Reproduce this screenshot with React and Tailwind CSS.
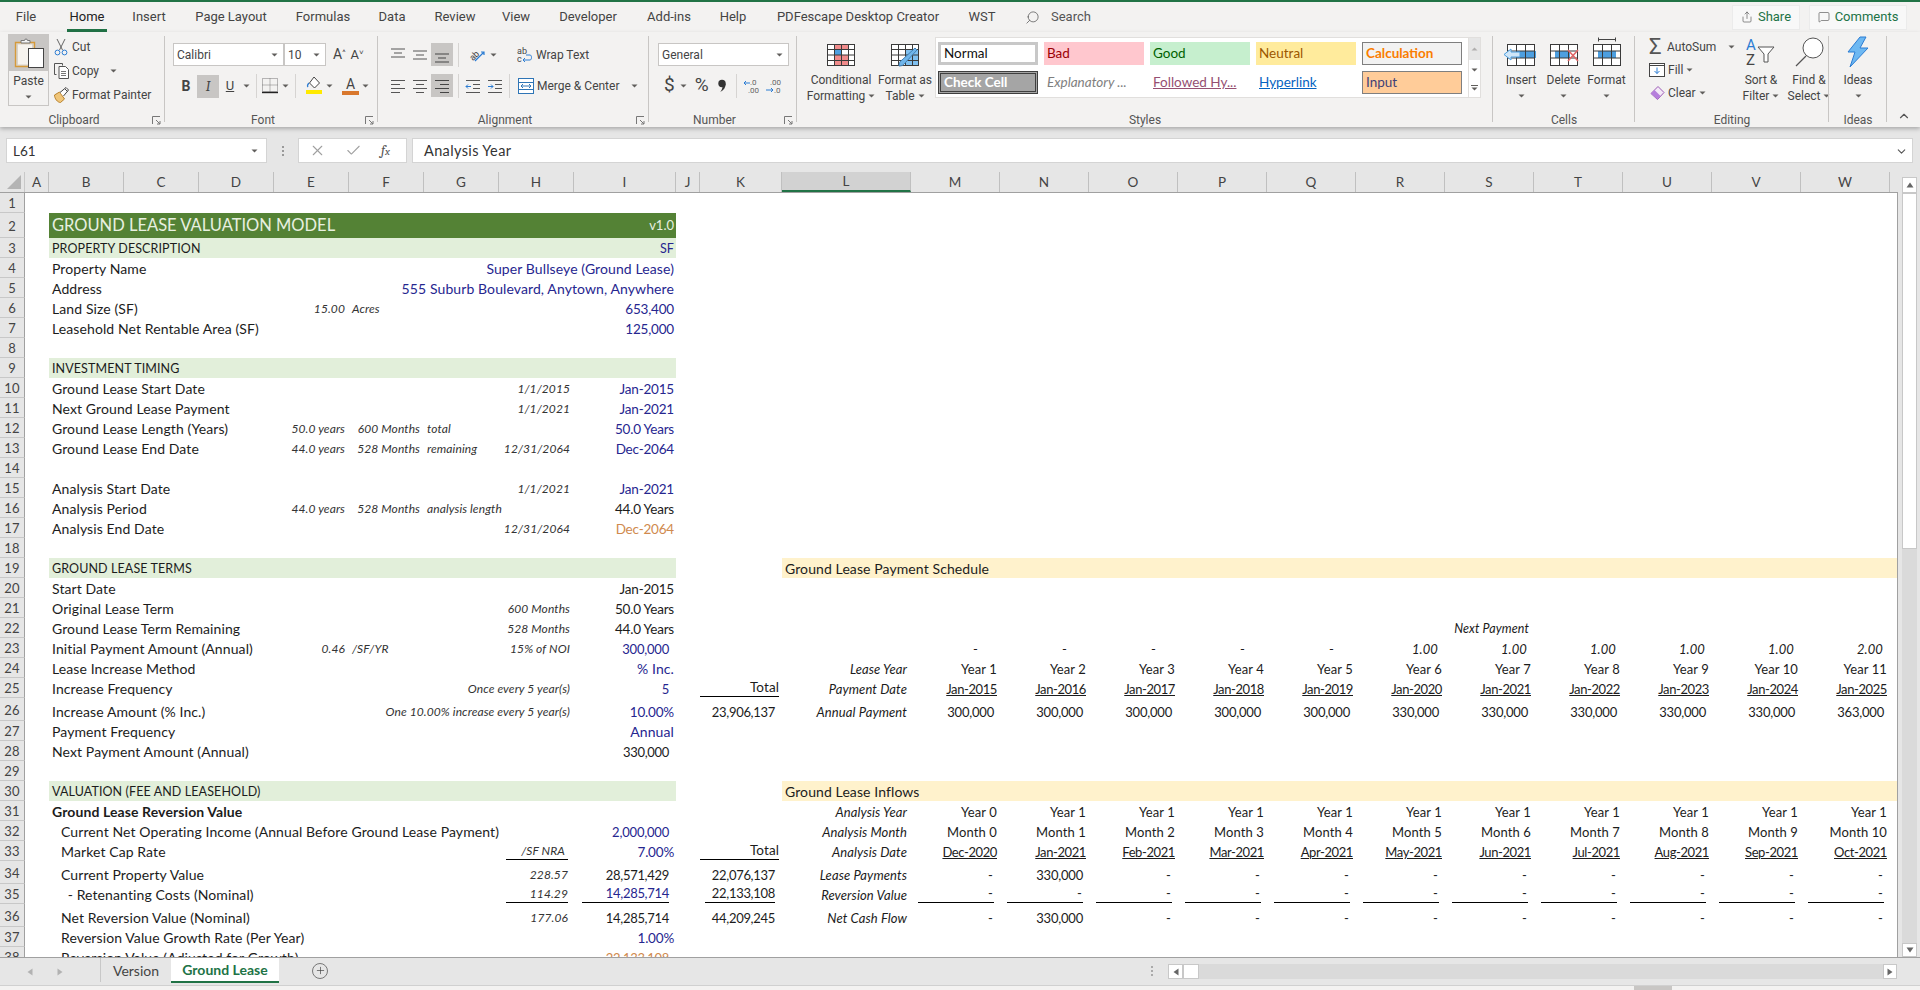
import React from 'react';
import { Search, Share, MessageSquare, ChevronDown, ChevronUp, Plus, X, Check } from 'lucide-react';

const COLS = [
  { k: 'A', w: 'w-[24px]' }, { k: 'B', w: 'w-[75px]' }, { k: 'C', w: 'w-[75px]' }, { k: 'D', w: 'w-[75px]' },
  { k: 'E', w: 'w-[75px]' }, { k: 'F', w: 'w-[75px]' }, { k: 'G', w: 'w-[75px]' }, { k: 'H', w: 'w-[75px]' },
  { k: 'I', w: 'w-[102px]' }, { k: 'J', w: 'w-[24px]' }, { k: 'K', w: 'w-[82px]' }, { k: 'L', w: 'w-[129px]' },
  { k: 'M', w: 'w-[89px]' }, { k: 'N', w: 'w-[89px]' }, { k: 'O', w: 'w-[89px]' }, { k: 'P', w: 'w-[89px]' },
  { k: 'Q', w: 'w-[89px]' }, { k: 'R', w: 'w-[89px]' }, { k: 'S', w: 'w-[89px]' }, { k: 'T', w: 'w-[89px]' },
  { k: 'U', w: 'w-[89px]' }, { k: 'V', w: 'w-[89px]' }, { k: 'W', w: 'w-[89px]' },
];
const LEFT_COLS = COLS.slice(0, 10);
const RIGHT_COLS = COLS.slice(10);
const SERIES = 'MNOPQRSTUVW'.split('');

// text styles for the sheet cells
const blueText = 'pr-[2px] text-[#26268f]';
const blue = 'pr-[2px] text-[#26268f] text-[13.5px] tracking-[-0.2px]';
const blueAcct = 'pr-[7px] text-[#26268f] text-[13px] tracking-[-0.2px]';
const note = 'pr-[4px] italic text-[12px] text-[#333333]';
const noteL = 'pl-[3px] italic text-[12px] text-[#333333]';
const noteWide = 'pr-[6px] italic text-[12px] text-[#333333]';
const acct = 'pr-[6px] text-[13px] tracking-[-0.2px]';
const acctBig = 'pr-[7px] text-[13px] tracking-[-0.3px]';
const plain = 'pr-[2px] text-[13.5px] tracking-[-0.2px]';

const L = (t, cls = 'pl-[3px]') => ({ t, cls });
const R = (t, cls = plain, extra = {}) => ({ t, cls, right: true, ...extra });
const rowLabel = (t) => R(t, 'pr-[4px] italic text-[13px]');
const indent = (t) => L(t, 'pl-[12px]');
const series = (values, make) => Object.fromEntries(values.map((v, i) => [SERIES[i], make(v)]));

const head = (t) => R(t, 'pr-[3px] text-[13px]');
const dates = (t) => R(t, 'pr-[3px] underline text-[13px] tracking-[-0.4px]');
const money = (t) => R(t, acct);
const dash = (t) => (t === '-' ? R('-', 'pr-[7px] text-[13px]') : R(t, acct));

const ROWS = [
  { n: 1 },
  { n: 2, h: 'h-[25px]', title: true },
  { n: 3, band: ['PROPERTY DESCRIPTION', 'SF'] },
  { n: 4, B: L('Property Name'), I: R('Super Bullseye (Ground Lease)', blueText) },
  { n: 5, B: L('Address'), I: R('555 Suburb Boulevard, Anytown, Anywhere', blueText) },
  { n: 6, B: L('Land Size (SF)'), E: R('15.00', note), F: L('Acres', noteL), I: R('653,400', blue) },
  { n: 7, B: L('Leasehold Net Rentable Area (SF)'), I: R('125,000', blue) },
  { n: 8 },
  { n: 9, band: ['INVESTMENT TIMING', ''] },
  { n: 10, B: L('Ground Lease Start Date'), H: R('1/1/2015', note), I: R('Jan-2015', blue) },
  { n: 11, B: L('Next Ground Lease Payment'), H: R('1/1/2021', note), I: R('Jan-2021', blue) },
  { n: 12, B: L('Ground Lease Length (Years)'), E: R('50.0 years', note), F: R('600 Months', note), G: L('total', noteL), I: R('50.0 Years', blue) },
  { n: 13, B: L('Ground Lease End Date'), E: R('44.0 years', note), F: R('528 Months', note), G: L('remaining', noteL), H: R('12/31/2064', note), I: R('Dec-2064', blue) },
  { n: 14 },
  { n: 15, B: L('Analysis Start Date'), H: R('1/1/2021', note), I: R('Jan-2021', blue) },
  { n: 16, B: L('Analysis Period'), E: R('44.0 years', note), F: R('528 Months', note), G: L('analysis length', noteL), I: R('44.0 Years') },
  { n: 17, B: L('Analysis End Date'), H: R('12/31/2064', note), I: R('Dec-2064', 'pr-[2px] text-[13.5px] tracking-[-0.2px] text-[#d08a4e]') },
  { n: 18 },
  { n: 19, band: ['GROUND LEASE TERMS', ''], rightBand: 'Ground Lease Payment Schedule' },
  { n: 20, B: L('Start Date'), I: R('Jan-2015') },
  { n: 21, B: L('Original Lease Term'), H: R('600 Months', note), I: R('50.0 Years') },
  { n: 22, B: L('Ground Lease Term Remaining'), H: R('528 Months', note), I: R('44.0 Years'), S: R('Next Payment', 'pr-[5px] italic text-[12.5px]') },
  {
    n: 23, B: L('Initial Payment Amount (Annual)'), E: R('0.46', note), F: L('/SF/YR', noteL), H: R('15% of NOI', note), I: R('300,000', blueAcct),
    ...series(['-', '-', '-', '-', '-', '1.00', '1.00', '1.00', '1.00', '1.00', '2.00'], (v) => (v === '-' ? R(v, 'pr-[22px] italic') : R(v, 'pr-[7px] italic text-[13px]'))),
  },
  {
    n: 24, B: L('Lease Increase Method'), I: R('% Inc.', blueText), L: rowLabel('Lease Year'),
    ...series(['Year 1', 'Year 2', 'Year 3', 'Year 4', 'Year 5', 'Year 6', 'Year 7', 'Year 8', 'Year 9', 'Year 10', 'Year 11'], head),
  },
  {
    n: 25, B: L('Increase Frequency'), H: R('Once every 5 year(s)', note), I: R('5', blueAcct),
    K: R('Total', 'text-[13.5px]', { line: 'w-[79px] mr-[3px]' }), L: rowLabel('Payment Date'),
    ...series(['Jan-2015', 'Jan-2016', 'Jan-2017', 'Jan-2018', 'Jan-2019', 'Jan-2020', 'Jan-2021', 'Jan-2022', 'Jan-2023', 'Jan-2024', 'Jan-2025'], dates),
  },
  {
    n: 26, h: 'h-[23px]', B: L('Increase Amount (% Inc.)'), H: R('One 10.00% increase every 5 year(s)', note), I: R('10.00%', blue),
    K: R('23,906,137', acctBig), L: rowLabel('Annual Payment'),
    ...series(['300,000', '300,000', '300,000', '300,000', '300,000', '330,000', '330,000', '330,000', '330,000', '330,000', '363,000'], money),
  },
  { n: 27, B: L('Payment Frequency'), I: R('Annual', blueText) },
  { n: 28, B: L('Next Payment Amount (Annual)'), I: R('330,000', acctBig) },
  { n: 29 },
  { n: 30, band: ['VALUATION (FEE AND LEASEHOLD)', ''], rightBand: 'Ground Lease Inflows' },
  {
    n: 31, B: L('Ground Lease Reversion Value', 'pl-[3px] font-bold'), L: rowLabel('Analysis Year'),
    ...series(['Year 0', 'Year 1', 'Year 1', 'Year 1', 'Year 1', 'Year 1', 'Year 1', 'Year 1', 'Year 1', 'Year 1', 'Year 1'], head),
  },
  {
    n: 32, B: indent('Current Net Operating Income (Annual Before Ground Lease Payment)'), I: R('2,000,000', blueAcct), L: rowLabel('Analysis Month'),
    ...series(['Month 0', 'Month 1', 'Month 2', 'Month 3', 'Month 4', 'Month 5', 'Month 6', 'Month 7', 'Month 8', 'Month 9', 'Month 10'], head),
  },
  {
    n: 33, B: indent('Market Cap Rate'), H: R('/SF NRA', 'pr-[3px] italic text-[12px] text-[#333333]', { line: 'w-[62px] mr-[6px]' }), I: R('7.00%', blue),
    K: R('Total', 'text-[13.5px]', { line: 'w-[79px] mr-[3px]' }), L: rowLabel('Analysis Date'),
    ...series(['Dec-2020', 'Jan-2021', 'Feb-2021', 'Mar-2021', 'Apr-2021', 'May-2021', 'Jun-2021', 'Jul-2021', 'Aug-2021', 'Sep-2021', 'Oct-2021'], dates),
  },
  {
    n: 34, h: 'h-[23px]', B: indent('Current Property Value'), H: R('228.57', noteWide), I: R('28,571,429', acctBig),
    K: R('22,076,137', acctBig), L: rowLabel('Lease Payments'),
    ...series(['-', '330,000', '-', '-', '-', '-', '-', '-', '-', '-', '-'], dash),
  },
  {
    n: 35, B: L(' - Retenanting Costs (Nominal)', 'pl-[15px]'), H: R('114.29', 'italic text-[12px] text-[#333333]', { line: 'w-[62px] mr-[6px]' }), I: R('14,285,714', 'text-[#26268f] text-[13px] tracking-[-0.3px]', { line: 'w-[87px] mr-[7px]' }),
    K: R('22,133,108', 'text-[13px] tracking-[-0.3px]', { line: 'w-[70px] mr-[7px]' }), L: rowLabel('Reversion Value'),
    ...series(Array(11).fill('-'), (v) => R(v, 'pr-[1px] text-[13px]', { line: 'w-[76px] mr-[6px]' })),
  },
  {
    n: 36, h: 'h-[23px]', B: indent('Net Reversion Value (Nominal)'), H: R('177.06', noteWide), I: R('14,285,714', acctBig),
    K: R('44,209,245', acctBig), L: rowLabel('Net Cash Flow'),
    ...series(['-', '330,000', '-', '-', '-', '-', '-', '-', '-', '-', '-'], dash),
  },
  { n: 37, B: indent('Reversion Value Growth Rate (Per Year)'), I: R('1.00%', blue) },
  { n: 38, B: indent('Reversion Value (Adjusted for Growth)'), I: R('22,133,108', 'pr-[7px] text-[13px] tracking-[-0.3px] text-[#d08a4e]') },
];

function Cell({ col, cell }) {
  if (!cell) return <div className={`${col.w} shrink-0`} />;
  return (
    <div className={`${col.w} shrink-0 flex items-end whitespace-pre ${cell.right ? 'justify-end' : 'justify-start'}`}>
      {cell.line ? (
        <div className={`${cell.line} mb-[1px] text-right border-b border-black leading-[17px] shrink-0 ${cell.cls}`}>{cell.t}</div>
      ) : (
        <span className={`leading-[18px] ${cell.cls}`}>{cell.t}</span>
      )}
    </div>
  );
}

function SheetRow({ row }) {
  return (
    <div className={`flex shrink-0 ${row.h || 'h-[20px]'}`}>
      <div className="w-[25px] shrink-0 flex items-center justify-center pt-[3px] bg-[#e6e6e6] border-r border-b border-r-[#a0a0a0] border-b-[#c8c8c8] text-[13px] text-[#444444]">
        {row.n}
      </div>
      <div className="w-[24px] shrink-0" />
      {row.title ? (
        <div className="w-[627px] shrink-0 flex items-center justify-between bg-[#548235] text-[#e8f0e0] pl-[3px] pr-[2px] tracking-normal">
          <span className="text-[16.5px]">GROUND LEASE VALUATION MODEL</span>
          <span className="text-[13px]">v1.0</span>
        </div>
      ) : row.band ? (
        <div className="w-[627px] shrink-0 flex items-end justify-between bg-[#e2efda] pl-[3px] pr-[2px] leading-[18px] text-[12.5px]">
          <span>{row.band[0]}</span>
          <span className="text-[#26268f]">{row.band[1]}</span>
        </div>
      ) : (
        LEFT_COLS.slice(1, 9).map((c) => <Cell key={c.k} col={c} cell={row[c.k]} />)
      )}
      <div className="w-[24px] shrink-0" />
      {row.rightBand ? (
        <>
          <div className="w-[82px] shrink-0" />
          <div className="w-[1116px] shrink-0 flex items-end bg-[#fff2cc] pl-[3px] leading-[18px]">{row.rightBand}</div>
        </>
      ) : (
        RIGHT_COLS.map((c) => <Cell key={c.k} col={c} cell={row[c.k]} />)
      )}
    </div>
  );
}

const Caret = ({ className = '' }) => (
  <svg width="7" height="4" viewBox="0 0 7 4" className={`shrink-0 ${className}`}>
    <path d="M0.5 0.5h6L3.5 3.5z" fill="#605e5c" />
  </svg>
);

const Launcher = () => (
  <svg width="9" height="9" viewBox="0 0 9 9">
    <path d="M0.5 8V0.5H8M4 4l4 4M8 5v3H5" fill="none" stroke="#777777" strokeWidth="1" />
  </svg>
);

function Group({ w, label, launcher, children, sep = true }) {
  return (
    <div className={`${w} shrink-0 h-[95px] flex flex-col relative`}>
      <div className="flex-1 flex min-h-0">{children}</div>
      <div className={`grid items-center h-[15px] mb-[1px] text-[12px] text-[#555555] justify-items-center ${launcher ? 'grid-cols-[1fr_17px]' : 'grid-cols-1'}`}>
        <span>{label}</span>
        {launcher && <Launcher />}
      </div>
      {sep && <div className="absolute right-0 top-[4px] bottom-[5px] w-[1px] bg-[#c8c6c4]" />}
    </div>
  );
}

// a plain spreadsheet-grid glyph used by the big ribbon buttons
function GridGlyph({ children, over, cols = [7, 14, 21], rows = [5.5, 11, 16.5] }) {
  return (
    <svg width="30" height="24" viewBox="0 0 30 24" className="shrink-0 overflow-visible">
      <g transform="translate(1 1)">
        <rect x="0" y="0" width="28" height="22" fill="#ffffff" />
        {children}
        <rect x="0.5" y="0.5" width="27" height="21" fill="none" stroke="#3a3a3a" />
        {cols.map((x) => <path key={x} d={`M${x + 0.5} 0V22`} stroke="#3a3a3a" />)}
        {rows.map((y) => <path key={y} d={`M0 ${y}H28`} stroke="#3a3a3a" />)}
        {over}
      </g>
    </svg>
  );
}

function BigButton({ w, glyph, lines, caretInline, className = '' }) {
  return (
    <div className={`${w} shrink-0 flex flex-col items-center pt-[10px] text-[12px] text-[#444444] leading-[16px] ${className}`}>
      <div className="h-[25px] flex items-center">{glyph}</div>
      <div className="mt-[5px] text-center whitespace-nowrap">{lines[0]}</div>
      {lines[1] ? (
        <div className="flex items-center gap-[3px] whitespace-nowrap">
          {lines[1]}
          {caretInline && <Caret />}
        </div>
      ) : (
        <div className="h-[16px] flex items-center"><Caret /></div>
      )}
    </div>
  );
}

const PasteIcon = () => (
  <svg width="34" height="34" viewBox="0 0 34 34">
    <path d="M3.5 6.5h19v24h-19z" fill="#d8d2c8" stroke="#d59a3a" strokeWidth="1.4" />
    <path d="M6 8.5h14v20H6z" fill="#f6f3ee" />
    <path d="M9 7V4.5h3.5a1.5 1.5 0 0 1 3 0H18V7z" fill="#f2f2f2" stroke="#777777" strokeWidth="1" />
    <rect x="16.5" y="12.5" width="15" height="19" fill="#ffffff" stroke="#444444" />
  </svg>
);

const CutIcon = () => (
  <svg width="16" height="18" viewBox="0 0 16 18">
    <path d="M4 1l5.5 11M12 1L6.5 12" fill="none" stroke="#666666" />
    <circle cx="4.5" cy="14.5" r="2.4" fill="none" stroke="#2b7cd3" />
    <circle cx="11.5" cy="14.5" r="2.4" fill="none" stroke="#2b7cd3" />
  </svg>
);

const CopyIcon = () => (
  <svg width="18" height="18" viewBox="0 0 18 18">
    <path d="M3.5 12.5h-2v-11h8v2" fill="none" stroke="#555555" />
    <path d="M6 4.5h6.5l3 3v9H6z" fill="#ffffff" stroke="#555555" />
    <path d="M8 9.5h5M8 11.5h5M8 13.5h5" stroke="#777777" />
  </svg>
);

const BrushIcon = () => (
  <svg width="18" height="18" viewBox="0 0 18 18">
    <path d="M1.5 9l5-3 5 7-4 3.5c-3 0-6-4-6-7.5z" fill="#f0c67a" stroke="#b9822d" />
    <path d="M7 6.5l6-5 2.5 2.5-5 6" fill="#ffffff" stroke="#444444" />
    <path d="M12 3l2.5 2.5" stroke="#444444" />
  </svg>
);

const AlignV = ({ pos }) => (
  <svg width="16" height="18" viewBox="0 0 16 18">
    {pos === 'top' && <path d="M1 3h14M4 7h8M1 11h14" stroke="#555555" />}
    {pos === 'mid' && <path d="M1 5h14M4 9h8M1 13h14" stroke="#555555" />}
    {pos === 'bot' && <path d="M1 8h14M4 12h8M1 16h14" stroke="#444444" />}
  </svg>
);

const AlignH = ({ pos }) => (
  <svg width="16" height="16" viewBox="0 0 16 16">
    {pos === 'l' && <path d="M1 2.5h14M1 6.5h9M1 10.5h14M1 14.5h9" stroke="#555555" />}
    {pos === 'c' && <path d="M1 2.5h14M4 6.5h8M1 10.5h14M4 14.5h8" stroke="#555555" />}
    {pos === 'r' && <path d="M1 2.5h14M6 6.5h9M1 10.5h14M6 14.5h9" stroke="#444444" />}
  </svg>
);

const Indent = ({ flip }) => (
  <svg width="16" height="16" viewBox="0 0 16 16">
    <path d="M1 2.5h14M8 6.5h7M8 10.5h7M1 14.5h14" stroke="#555555" />
    {flip ? (
      <path d="M1 8.5h5M4 6.5l2 2-2 2" fill="none" stroke="#2b7cd3" />
    ) : (
      <path d="M6 8.5H1M3 6.5l-2 2 2 2" fill="none" stroke="#2b7cd3" />
    )}
  </svg>
);

const Square = ({ on, children, className = '' }) => (
  <div className={`w-[22px] h-[23px] flex items-center justify-center shrink-0 ${on ? 'bg-[#c8c6c4]' : ''} ${className}`}>
    {children}
  </div>
);

const Sep = ({ h = 'h-[24px]', className = '' }) => <div className={`w-[1px] ${h} bg-[#d6d4d2] shrink-0 ${className}`} />;

const SelectBox = ({ w, label }) => (
  <div className={`${w} h-[23px] bg-white border border-[#c8c6c4] flex items-center justify-between pl-[3px] pr-[5px] text-[12px] text-[#444444] shrink-0`}>
    <span>{label}</span>
    <Caret />
  </div>
);

const StyleCell = ({ className, children }) => (
  <div className={`w-[100px] h-[23px] flex items-center pl-[3px] text-[13.5px] shrink-0 ${className}`}>{children}</div>
);

const CAT = "[font-family:'Lato',sans-serif]";

function TabsBar() {
  const tabs = [
    ['File', 'w-[52px]'], ['Home', 'w-[70px]'], ['Insert', 'w-[54px]'], ['Page Layout', 'w-[110px]'], ['Formulas', 'w-[74px]'],
    ['Data', 'w-[64px]'], ['Review', 'w-[62px]'], ['View', 'w-[60px]'], ['Developer', 'w-[84px]'], ['Add-ins', 'w-[78px]'],
    ['Help', 'w-[50px]'], ['PDFescape Desktop Creator', 'w-[200px]'], ['WST', 'w-[48px]'],
  ];
  return (
    <div className="h-[30px] shrink-0 flex items-center text-[13px] text-[#444444]">
      {tabs.map(([t, w]) => (
        <div key={t} className={`${w} shrink-0 h-full flex items-center justify-center relative whitespace-nowrap`}>
          {t === 'Home' ? (
            <span className="text-[#222222] relative h-[30px] flex items-center px-[3px] border-b-[3px] border-[#217346] pt-[3px]">{t}</span>
          ) : t}
        </div>
      ))}
      <div className="flex items-center ml-[19px] gap-[11px] text-[#555555]">
        <Search size={15} strokeWidth={1.2} className="-scale-x-100" />
        <span>Search</span>
      </div>
      <div className="ml-auto flex items-center gap-[9px] pr-[13px]">
        <div className="w-[68px] h-[25px] bg-[#f8f8f8] border border-[#ebebeb] flex items-center justify-center gap-[5px] text-[#217346]">
          <Share size={12} strokeWidth={1.3} className="text-[#555555]" />Share
        </div>
        <div className="w-[98px] h-[25px] bg-[#f8f8f8] border border-[#ebebeb] flex items-center justify-center gap-[5px] text-[#217346]">
          <MessageSquare size={12} strokeWidth={1.3} className="text-[#555555]" />Comments
        </div>
      </div>
    </div>
  );
}

function Ribbon() {
  return (
    <div className="h-[95px] shrink-0 flex relative z-10 shadow-[0_2px_4px_rgba(0,0,0,0.25)] bg-[#f3f2f1] text-[#444444] text-[12px]">
      <Group w="w-[165px]" label="Clipboard" launcher>
        <div className="ml-[8px] mt-[2px] w-[41px] h-[72px] flex flex-col border border-[#c8c6c4] shrink-0">
          <div className="h-[36px] bg-[#c8c6c4] flex items-center justify-center"><PasteIcon /></div>
          <div className="flex flex-col items-center pt-[1px]">
            <span className="leading-[18px]">Paste</span>
            <Caret className="mt-[5px]" />
          </div>
        </div>
        <div className="ml-[4px] flex flex-col pt-[3px] text-[12px]">
          <div className="h-[24px] flex items-center"><CutIcon /><span className="ml-[3px]">Cut</span></div>
          <div className="h-[24px] flex items-center gap-[1px]"><CopyIcon /><span>Copy</span><Caret className="ml-[10px]" /></div>
          <div className="h-[24px] flex items-center gap-[1px]"><BrushIcon /><span>Format Painter</span></div>
        </div>
      </Group>

      <Group w="w-[213px]" label="Font" launcher>
        <div className="ml-[8px] pt-[11px] flex flex-col">
          <div className="flex items-center">
            <SelectBox w="w-[111px]" label="Calibri" />
            <SelectBox w="w-[42px]" label="10" />
            <span className="ml-[7px] text-[14px]">A<sup className="text-[8px]">^</sup></span>
            <span className="ml-[5px] text-[13px]">A<sup className="text-[8px]">˅</sup></span>
          </div>
          <div className="flex items-center mt-[8px] ml-[2px]">
            <Square><span className="font-bold text-[14px]">B</span></Square>
            <Square on><span className="italic font-serif text-[14px]">I</span></Square>
            <Square><span className="underline text-[13px]">U</span></Square>
            <Caret className="ml-[2px]" />
            <Sep className="ml-[6px]" />
            <svg width="18" height="18" viewBox="0 0 18 18" className="ml-[4px]">
              <path d="M1.5 1.5h15v13h-15zM9 1.5v13M1.5 8h15" fill="none" stroke="#777777" strokeDasharray="1 1" />
              <path d="M1 15.5h16" stroke="#222222" strokeWidth="1.4" />
            </svg>
            <Caret className="ml-[3px]" />
            <Sep className="ml-[6px]" />
            <svg width="18" height="20" viewBox="0 0 18 20" className="ml-[9px]">
              <path d="M9 1l5.5 6-5 5-5-5z" fill="#ffffff" stroke="#444444" />
              <path d="M4 7c-1.5 1.5-2 3-1 4" fill="none" stroke="#2b7cd3" strokeWidth="1.3" />
              <rect x="1" y="14" width="16" height="4" fill="#ffea00" />
            </svg>
            <Caret className="ml-[3px]" />
            <div className="ml-[9px] flex flex-col items-center w-[17px]">
              <span className="text-[14px] leading-[14px]">A</span>
              <div className="w-[17px] h-[4px] bg-[#d9782d]" />
            </div>
            <Caret className="ml-[3px]" />
          </div>
        </div>
      </Group>

      <Group w="w-[271px]" label="Alignment" launcher>
        <div className="ml-[9px] pt-[11px] flex flex-col">
          <div className="flex items-center h-[23px]">
            <Square><AlignV pos="top" /></Square>
            <Square><AlignV pos="mid" /></Square>
            <Square on><AlignV pos="bot" /></Square>
            <Sep className="ml-[5px]" />
            <svg width="20" height="18" viewBox="0 0 20 18" className="ml-[9px]">
              <text x="1" y="12" fontSize="9" fill="#444444" transform="rotate(-45 7 9)" fontFamily="Roboto, sans-serif">ab</text>
              <path d="M7 15l9-9M13 6h3v3" fill="none" stroke="#2b7cd3" strokeWidth="1.2" />
            </svg>
            <Caret className="ml-[2px]" />
            <div className="ml-[20px] flex items-center gap-[3px]">
              <svg width="16" height="18" viewBox="0 0 16 18">
                <text x="0" y="8" fontSize="9" fill="#444444" fontFamily="Roboto, sans-serif">ab</text>
                <text x="0" y="16" fontSize="9" fill="#444444" fontFamily="Roboto, sans-serif">c</text>
                <path d="M6 14h7c2 0 2-5 0-5H9M8 12l-2 2 2 2" fill="none" stroke="#2b7cd3" />
              </svg>
              <span>Wrap Text</span>
            </div>
          </div>
          <div className="flex items-center h-[23px] mt-[8px]">
            <Square><AlignH pos="l" /></Square>
            <Square><AlignH pos="c" /></Square>
            <Square on><AlignH pos="r" /></Square>
            <Sep className="ml-[5px]" />
            <Square className="ml-[3px]"><Indent /></Square>
            <Square><Indent flip /></Square>
            <Sep className="ml-[3px]" />
            <div className="ml-[8px] flex items-center gap-[3px]">
              <svg width="16" height="16" viewBox="0 0 16 16">
                <rect x="0.5" y="0.5" width="15" height="15" fill="#ffffff" stroke="#2e75b6" />
                <path d="M0.5 4.5h15M0.5 11.5h15" stroke="#2e75b6" />
                <path d="M3 8h10M5 6l-2 2 2 2M11 6l2 2-2 2" fill="none" stroke="#2e75b6" />
              </svg>
              <span>Merge &amp; Center</span>
              <Caret className="ml-[9px]" />
            </div>
          </div>
        </div>
      </Group>

      <Group w="w-[148px]" label="Number" launcher>
        <div className="ml-[9px] pt-[11px] flex flex-col">
          <SelectBox w="w-[131px]" label="General" />
          <div className="flex items-center mt-[8px] h-[23px]">
            <span className="ml-[6px] text-[19px]">$</span>
            <Caret className="ml-[5px]" />
            <span className="ml-[8px] text-[19px]">%</span>
            <svg width="10" height="14" viewBox="0 0 10 14" className="ml-[8px]">
              <circle cx="5" cy="4.5" r="3.7" fill="#333333" />
              <path d="M8.7 4.5c0 4-2 7-5.5 8.5 1.5-2 2-3 2.3-5z" fill="#333333" />
            </svg>
            <Sep className="ml-[9px]" />
            <svg width="40" height="18" viewBox="0 0 40 18" className="ml-[6px]">
              <text x="7" y="8" fontSize="8" fill="#666666" fontFamily="Roboto, sans-serif">.0</text>
              <text x="5" y="16" fontSize="8" fill="#666666" fontFamily="Roboto, sans-serif">.00</text>
              <path d="M7 6H1M3 4L1 6l2 2" fill="none" stroke="#2b7cd3" />
              <text x="27" y="8" fontSize="8" fill="#666666" fontFamily="Roboto, sans-serif">.00</text>
              <text x="31" y="16" fontSize="8" fill="#666666" fontFamily="Roboto, sans-serif">.0</text>
              <path d="M23 13h7M28 11l2 2-2 2" fill="none" stroke="#2b7cd3" />
            </svg>
          </div>
        </div>
      </Group>

      <Group w="w-[696px]" label="Styles">
        <div className="w-[6px] shrink-0" />
        <BigButton
          w="w-[76px]"
          lines={['Conditional', 'Formatting']}
          caretInline
          glyph={
            <GridGlyph cols={[7, 14, 21]} rows={[5.5, 11, 16.5]}>
              <rect x="7" y="0" width="14" height="5.5" fill="#f08b8b" />
              <rect x="7" y="5.5" width="7" height="5.5" fill="#4d9fe0" />
              <rect x="7" y="11" width="14" height="11" fill="#f08b8b" />
            </GridGlyph>
          }
        />
        <BigButton
          w="w-[52px]"
          lines={['Format as', 'Table']}
          caretInline
          glyph={
            <GridGlyph
              over={<path d="M26 6L14 19c-1 2-3 3-6 3 0-3 1-5 3-6L24 4z" fill="#6fb5ea" stroke="#3f7fb5" />}
            >
              <rect x="14" y="5.5" width="14" height="16.5" fill="#7fc0f0" />
            </GridGlyph>
          }
        />
        <div className="ml-[4px] mt-[5px] w-[546px] h-[61px] bg-white border border-[#e1dfdd] flex shrink-0">
          <div className="w-[532px] grid grid-cols-[repeat(5,100px)] gap-x-[6px] content-start pl-[2px] pt-[4px] gap-y-[6px] [font-family:'Lato',sans-serif]">
            <StyleCell className="bg-white border-[3px] border-[#c8c8c8] text-[#111111]">Normal</StyleCell>
            <StyleCell className="bg-[#ffc7ce] text-[#9c0006]">Bad</StyleCell>
            <StyleCell className="bg-[#c6efce] text-[#006100]">Good</StyleCell>
            <StyleCell className="bg-[#ffeb9c] text-[#9c5700]">Neutral</StyleCell>
            <StyleCell className="bg-[#f2f2f2] border border-[#7f7f7f] text-[#fa7d00] font-bold">Calculation</StyleCell>
            <StyleCell className="bg-[#a5a5a5] border-[3px] border-double border-[#3f3f3f] text-white font-bold">Check Cell</StyleCell>
            <StyleCell className="italic text-[#7f7f7f]">Explanatory ...</StyleCell>
            <StyleCell className="text-[#954f72] underline">Followed Hy...</StyleCell>
            <StyleCell className="text-[#0563c1] underline">Hyperlink</StyleCell>
            <StyleCell className="bg-[#ffcc99] border border-[#7f7f7f] text-[#3f3f76]">Input</StyleCell>
          </div>
          <div className="w-[12px] flex flex-col border-l border-[#e1dfdd]">
            <div className="h-[22px] bg-[#e6e6e6] flex items-center justify-center"><Caret className="rotate-180 opacity-40" /></div>
            <div className="h-[19px] flex items-center justify-center"><Caret /></div>
            <div className="h-[18px] flex flex-col gap-[1px] items-center justify-center"><div className="w-[7px] h-[1px] bg-[#605e5c]" /><Caret /></div>
          </div>
        </div>
      </Group>

      <Group w="w-[142px]" label="Cells">
        <div className="w-[7px] shrink-0" />
        <BigButton
          w="w-[42px]"
          lines={['Insert']}
          glyph={
            <GridGlyph
              cols={[9, 18]}
              rows={[7, 14]}
              over={<path d="M-3 10.5L4 5v3h9v5H4v3z" fill="#cfe6f8" stroke="#4d9fe0" />}
            >
              <rect x="9" y="7" width="20" height="7" fill="#4d9fe0" />
            </GridGlyph>
          }
        />
        <BigButton
          w="w-[43px]"
          lines={['Delete']}
          glyph={
            <GridGlyph
              cols={[9, 18]}
              rows={[7, 14]}
              over={<path d="M18 6l10 11M28 6L18 17" stroke="#e06666" strokeWidth="1.6" />}
            >
              <rect x="5" y="7" width="15" height="7" fill="#4d9fe0" />
            </GridGlyph>
          }
        />
        <BigButton
          w="w-[43px]"
          lines={['Format']}
          glyph={
            <GridGlyph
              cols={[9, 18]}
              rows={[7, 14]}
              over={<path d="M5 -4.5H23M5.5 -6.5v4M22.5 -6.5v4" fill="none" stroke="#444444" />}
            >
              <rect x="5" y="7" width="18" height="7" fill="#4d9fe0" />
            </GridGlyph>
          }
        />
      </Group>

      <Group w="w-[194px]" label="Editing">
        <div className="ml-[14px] flex flex-col pt-[3px] w-[89px] shrink-0">
          <div className="h-[23px] flex items-center gap-[3px]">
            <span className="text-[22px] w-[15px] leading-none text-[#555555]">Σ</span>
            <span>AutoSum</span>
            <Caret className="ml-[9px]" />
          </div>
          <div className="h-[23px] flex items-center gap-[3px]">
            <svg width="16" height="16" viewBox="0 0 16 16">
              <rect x="0.5" y="1.5" width="15" height="13" fill="#ffffff" stroke="#444444" />
              <path d="M0.5 3.5h15" stroke="#444444" />
              <path d="M8 5.5v6M5.5 9L8 11.5 10.5 9" fill="none" stroke="#2b7cd3" />
            </svg>
            <span>Fill</span>
            <Caret />
          </div>
          <div className="h-[23px] flex items-center gap-[3px]">
            <svg width="16" height="16" viewBox="0 0 16 16">
              <path d="M9 1.5l6 6-6.5 7-6.5-6z" fill="#f3e9f7" stroke="#9b59b6" />
              <path d="M2 8.5l3.5-3.5 6 6-3 3.2z" fill="#b57edc" />
            </svg>
            <span>Clear</span>
            <Caret />
          </div>
        </div>
        <BigButton
          w="w-[46px]"
          lines={['Sort &', 'Filter']}
          caretInline
          glyph={
            <svg width="32" height="30" viewBox="0 0 32 30" className="-mt-[6px]">
              <text x="1" y="13" fontSize="15" fill="#2b7cd3" fontFamily="Roboto, sans-serif">A</text>
              <text x="1" y="28" fontSize="15" fill="#444444" fontFamily="Roboto, sans-serif">Z</text>
              <path d="M13 10h16l-6 7v8h-4v-8z" fill="#ffffff" stroke="#555555" />
            </svg>
          }
        />
        <BigButton
          w="w-[50px]"
          lines={['Find &', 'Select']}
          caretInline
          glyph={
            <svg width="32" height="32" viewBox="0 0 32 32" className="-mt-[6px]">
              <circle cx="20" cy="12" r="10" fill="#ffffff" stroke="#555555" />
              <path d="M13 20L3 30" stroke="#555555" strokeWidth="1.3" />
            </svg>
          }
        />
      </Group>

      <Group w="w-[58px]" label="Ideas">
        <BigButton
          w="w-[58px]"
          lines={['Ideas']}
          glyph={
            <svg width="26" height="32" viewBox="0 0 26 32" className="-mt-[6px]">
              <path d="M15 1L3 16h7L5 31l18-19h-8l6-11z" fill="#6db8f2" stroke="#2b7cd3" />
            </svg>
          }
        />
      </Group>

      <div className="flex-1 flex items-end justify-center pb-[4px]">
        <ChevronUp size={14} strokeWidth={2} className="text-[#555555]" />
      </div>
    </div>
  );
}

function FormulaBar() {
  return (
    <div className="h-[41px] shrink-0 flex items-start pt-[11px] pl-[6px] bg-[#e6e6e6] text-[13.5px] text-[#333333]">
      <div className={`w-[261px] h-[25px] bg-white border border-[#d4d4d4] flex items-center justify-between pl-[6px] pr-[8px] pt-[1px] ${CAT}`}>
        <span>L61</span>
        <Caret />
      </div>
      <div className="w-[31px] h-[25px] flex flex-col items-center justify-center gap-[2px]">
        <div className="w-[2px] h-[2px] bg-[#999999]" />
        <div className="w-[2px] h-[2px] bg-[#999999]" />
        <div className="w-[2px] h-[2px] bg-[#999999]" />
      </div>
      <div className="w-[109px] h-[25px] bg-white border border-[#d4d4d4] flex items-center pl-[10px] gap-[19px] text-[#a0a0a0]">
        <X size={17} strokeWidth={1.5} />
        <Check size={17} strokeWidth={1.5} />
        <span className="italic font-serif text-[14px] text-[#555555]">f<span className="text-[11px]">x</span></span>
      </div>
      <div className={`ml-[5px] w-[1501px] h-[25px] bg-white border border-[#d4d4d4] flex items-center justify-between pl-[11px] pr-[4px] pt-[1px] text-[14.5px] tracking-wide ${CAT}`}>
        <span>Analysis Year</span>
        <ChevronDown size={13} strokeWidth={2} className="text-[#555555]" />
      </div>
    </div>
  );
}

function ColumnHeaders() {
  return (
    <div className={`h-[25px] shrink-0 flex items-end bg-[#e6e6e6] border-b border-[#a0a0a0] text-[13.5px] text-[#444444] ${CAT}`}>
      <div className="w-[25px] h-[20px] shrink-0 flex items-end justify-end pr-[3px] pb-[3px] border-r border-[#c8c8c8]">
        <svg width="14" height="14" viewBox="0 0 14 14"><path d="M14 0v14H0z" fill="#b4b4b4" /></svg>
      </div>
      {COLS.map((c) => (
        <div
          key={c.k}
          className={`${c.w} h-[20px] shrink-0 flex items-center justify-center border-r border-[#c0c0c0] ${c.k === 'L' ? 'bg-[#d2d2d2] border-b-2 border-b-[#217346]' : ''}`}
        >
          {c.k}
        </div>
      ))}
      <div className="flex-1" />
    </div>
  );
}

const ScrollButton = ({ children, className = '' }) => (
  <div className={`bg-white border border-[#c8c8c8] flex items-center justify-center shrink-0 ${className}`}>{children}</div>
);

const Triangle = ({ dir }) => (
  <svg width="8" height="8" viewBox="0 0 8 8">
    {dir === 'up' && <path d="M4 1.5L7.5 6.5h-7z" fill="#666666" />}
    {dir === 'down' && <path d="M4 6.5L7.5 1.5h-7z" fill="#666666" />}
    {dir === 'left' && <path d="M1.5 4L6.5 .5v7z" fill="#666666" />}
    {dir === 'right' && <path d="M6.5 4L1.5 .5v7z" fill="#666666" />}
  </svg>
);

function SheetTabs() {
  return (
    <div className="h-[28px] shrink-0 flex bg-[#e6e6e6] border-t border-[#a0a0a0] text-[14px] text-[#444444] relative z-10">
      <div className="w-[100px] shrink-0 flex items-center pl-[26px] gap-[22px] opacity-40">
        <Triangle dir="left" />
        <Triangle dir="right" />
      </div>
      <div className={`w-[71px] shrink-0 h-[24px] flex items-center justify-center bg-[#e6e6e6] border-l border-[#c8c8c8] ${CAT}`}>Version</div>
      <div className={`w-[108px] shrink-0 h-[25px] flex items-center justify-center bg-white border-b-2 border-[#217346] text-[#217346] font-bold ${CAT}`}>Ground Lease</div>
      <div className="ml-[33px] h-[25px] flex items-center">
        <div className="w-[16px] h-[16px] rounded-full border border-[#777777] flex items-center justify-center">
          <Plus size={11} strokeWidth={1.5} />
        </div>
      </div>
      <div className="ml-[819px] h-[25px] flex flex-col justify-center items-center gap-[2px] w-[10px]">
        <div className="w-[2px] h-[2px] bg-[#aaaaaa]" />
        <div className="w-[2px] h-[2px] bg-[#aaaaaa]" />
        <div className="w-[2px] h-[2px] bg-[#aaaaaa]" />
      </div>
      <div className="ml-[11px] mt-[6px] w-[729px] h-[15px] flex bg-[#dadada]">
        <ScrollButton className="w-[15px]"><Triangle dir="left" /></ScrollButton>
        <div className="w-[16px] bg-white border border-[#c8c8c8]" />
        <div className="flex-1" />
        <ScrollButton className="w-[14px]"><Triangle dir="right" /></ScrollButton>
      </div>
    </div>
  );
}

export default function App() {
  return (
    <div className="w-[1920px] h-[990px] overflow-hidden flex flex-col bg-[#f3f2f1]">
      <div className="h-[2px] shrink-0 bg-[#217346]" />
      <div className="[font-family:'Roboto',sans-serif]">
        <TabsBar />
        <Ribbon />
        <FormulaBar />
      </div>

      <div className="flex h-[789px] shrink-0">
        <div className="w-[1898px] shrink-0 flex flex-col">
          <ColumnHeaders />
          <div className={`h-[764px] bg-white overflow-hidden flex flex-col text-[14px] tracking-[0.1px] text-[#1c1c1c] border-r border-[#a0a0a0] ${CAT}`}>
            {ROWS.map((row) => <SheetRow key={row.n} row={row} />)}
          </div>
        </div>
        <div className="flex-1 bg-[#e6e6e6] flex flex-col pt-[9px] pl-[4px] pr-[3px]">
          <ScrollButton className="h-[16px]"><Triangle dir="up" /></ScrollButton>
          <div className="h-[356px] bg-white border border-[#c8c8c8] shrink-0" />
          <div className="flex-1 bg-[#dadada]" />
          <ScrollButton className="h-[14px]"><Triangle dir="down" /></ScrollButton>
        </div>
      </div>

      <SheetTabs />

      <div className="flex-1 flex justify-end border-t border-[#d0d0d0] bg-[#f3f2f1] pr-[248px]">
        <div className="w-[38px] h-full bg-[#c8c6c4]" />
      </div>
    </div>
  );
}
